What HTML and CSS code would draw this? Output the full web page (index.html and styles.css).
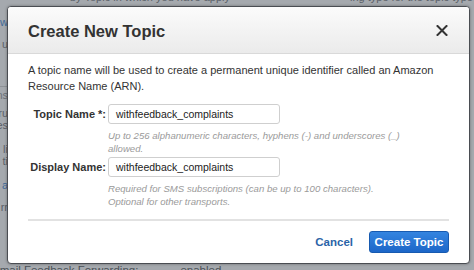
FILE: index.html
```html
<!DOCTYPE html>
<html>
<head>
<meta charset="utf-8">
<link rel="stylesheet" href="styles.css">
</head>
<body>
<div class="page">
  <div class="bg-top">
    <span class="bg-frag">by Topic in which you have apply</span>
    <span class="bg-frag">ing type for the topic type</span>
  </div>
  <div class="bg-left">
    <div class="bg-line link l1">Vew</div>
    <div class="bg-line l2">u</div>
    <div class="bg-rule"></div>
    <div class="bg-line l3">ns</div>
    <div class="bg-line l4">ru</div>
    <div class="bg-line l5">es</div>
    <div class="bg-line l6">li</div>
    <div class="bg-line l7">ti</div>
    <div class="bg-line link l8">a</div>
    <div class="bg-line l9">rr</div>
  </div>
  <div class="bg-bottom">
    <span class="bg-key">Email Feedback Forwarding:</span>
    <span class="bg-val">enabled</span>
  </div>
</div>

<div class="modal">
  <div class="modal-header">
    <h1 class="modal-title">Create New Topic</h1>
    <svg class="close" width="12" height="11" viewBox="0 0 12 11" aria-hidden="true">
      <path d="M1.5 1 L10.5 10 M10.5 1 L1.5 10" stroke="#333" stroke-width="2" stroke-linecap="square"/>
    </svg>
  </div>
  <div class="modal-body">
    <p class="intro">A topic name will be used to create a permanent unique identifier called an Amazon Resource Name (ARN).</p>
    <div class="field">
      <label class="label">Topic Name *:</label>
      <div class="control">
        <div class="input">withfeedback_complaints</div>
        <div class="hint">Up to 256 alphanumeric characters, hyphens (-) and underscores (_) allowed.</div>
      </div>
    </div>
    <div class="field">
      <label class="label">Display Name:</label>
      <div class="control">
        <div class="input">withfeedback_complaints</div>
        <div class="hint">Required for SMS subscriptions (can be up to 100 characters). Optional for other transports.</div>
      </div>
    </div>
  </div>
  <div class="modal-footer">
    <span class="cancel">Cancel</span>
    <span class="primary">Create Topic</span>
  </div>
</div>
</body>
</html>
```

FILE: styles.css
```css
* { box-sizing: border-box; }
html, body { margin: 0; padding: 0; }
body {
  width: 474px;
  height: 270px;
  overflow: hidden;
  background: #a5a9ae;
  font-family: "Liberation Sans", Arial, Helvetica, sans-serif;
  position: relative;
}

/* background page (under the modal overlay) */
.page {
  width: 474px;
  height: 270px;
  display: flex;
  flex-direction: column;
  color: #5a6067;
  font-size: 11px;
}
.bg-top {
  height: 6px;
  overflow: hidden;
  display: flex;
  gap: 120px;
  padding-left: 70px;
  line-height: 12px;
  font-size: 11px;
}
.bg-top .bg-frag { display: block; margin-top: -9px; white-space: nowrap; }
.bg-left {
  flex: 1;
  display: flex;
  flex-direction: column;
  align-items: flex-end;
  width: 8px;
  overflow: hidden;
}
.bg-line { white-space: nowrap; line-height: 12px; }
.link { color: #3f6a98; }
.l1 { margin-top: 10px; }
.l2 { margin-top: 10px; }
.bg-rule { align-self: stretch; height: 1px; background: #8d9196; margin-top: 36px; }
.l3 { margin-top: 2px; color: #6b7178; }
.l4 { margin-top: 6px; }
.l5 { margin-top: 0; }
.l6 { margin-top: 12px; }
.l7 { margin-top: 0; }
.l8 { margin-top: 12px; }
.l9 { margin-top: 10px; }
.bg-bottom {
  height: 6px;
  display: flex;
  gap: 42px;
  margin-left: -8px;
  line-height: 12px;
  font-size: 11.5px;
  color: #4c5258;
}

/* modal */
.modal {
  position: absolute;
  left: 7px;
  top: 6px;
  width: 463px;
  height: 258px;
  background: #fff;
  border: 1px solid #4a4d52;
  border-radius: 4px;
  box-shadow: 0 0 3px rgba(0,0,0,0.35);
  overflow: hidden;
  display: flex;
  flex-direction: column;
}
.modal-header {
  height: 47px;
  flex: none;
  display: flex;
  align-items: center;
  justify-content: space-between;
  padding: 0 20px 0 20px;
  background: linear-gradient(#fbfbfb, #ebebeb);
  border-bottom: 1px solid #d9d9d9;
}
.modal-title {
  margin: 0;
  font-size: 16.5px;
  font-weight: bold;
  color: #333;
  padding-top: 3px;
}
.close { display: block; margin-right: 1px; }

.modal-body {
  padding: 8px 20px 0 20px;
}
.intro {
  margin: 0;
  font-size: 11px;
  line-height: 16px;
  color: #333;
  width: 420px;
}
.field {
  display: flex;
  align-items: flex-start;
  gap: 2px;
}
.field:first-of-type { margin-top: 10px; }
.label {
  width: 78px;
  flex: none;
  text-align: right;
  font-size: 11px;
  font-weight: bold;
  color: #333;
  line-height: 20px;
  white-space: nowrap;
}
.control { display: flex; flex-direction: column; }
.input {
  width: 172px;
  height: 20px;
  border: 1px solid #cfcfcf;
  border-radius: 3px;
  padding: 0 7px;
  font-size: 10.5px;
  line-height: 18px;
  color: #222;
}
.hint {
  margin-top: 5px;
  width: 298px;
  font-size: 9.6px;
  line-height: 13px;
  font-style: italic;
  color: #9a9a9a;
  padding-bottom: 2px;
}

.modal-footer {
  margin: 9px 20px 0 20px;
  border-top: 2px solid #e2e2e2;
  display: flex;
  justify-content: flex-end;
  align-items: center;
  gap: 16px;
  padding-top: 10px;
}
.cancel {
  font-size: 11.5px;
  font-weight: bold;
  color: #2b64a8;
}
.primary {
  width: 80px;
  height: 22px;
  display: flex;
  align-items: center;
  justify-content: center;
  border: 1px solid #175ab0;
  border-radius: 3px;
  background: linear-gradient(#3484e0, #1c66c8);
  color: #fff;
  font-size: 11.5px;
  font-weight: bold;
}
```
